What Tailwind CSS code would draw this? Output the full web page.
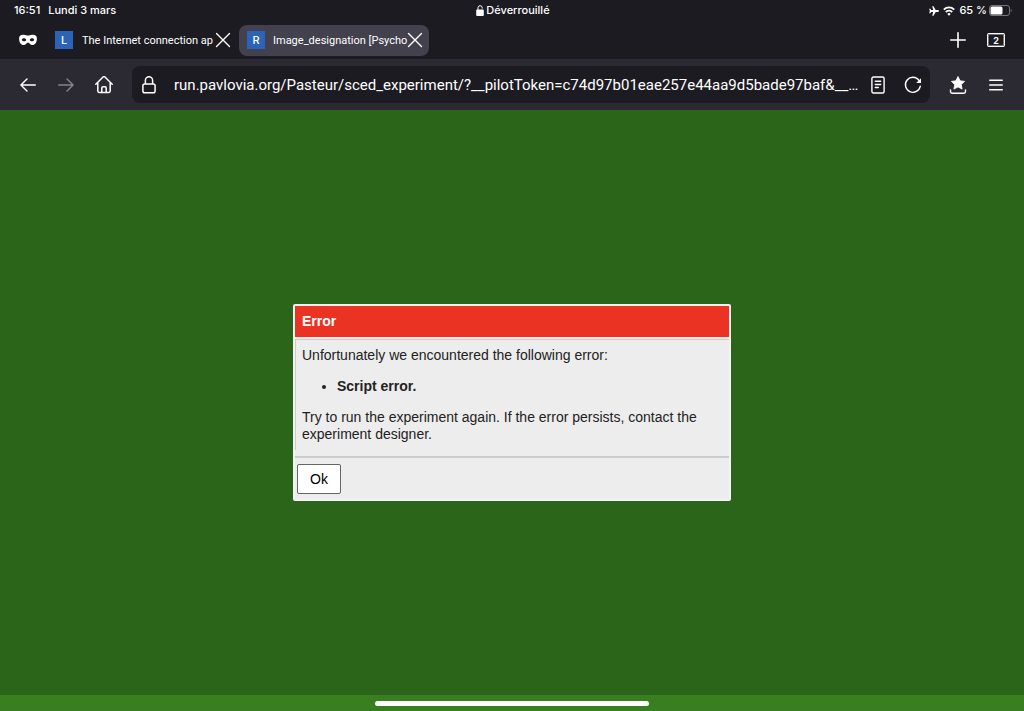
<!DOCTYPE html>
<html lang="fr">
<head>
    <meta charset="UTF-8">
    <meta name="viewport" content="width=device-width, initial-scale=1.0">
    <title>Image_designation [PsychoJS]</title>
    <script src="https://cdn.jsdelivr.net/npm/@tailwindcss/browser@4"></script>
</head>
<body class="flex flex-col min-h-screen bg-[#2b6519] text-white font-['Inter',sans-serif]">
    <!-- Status bar -->
    <div class="grid grid-cols-3 items-center h-[21px] pl-[14px] pr-3 bg-[#1c1b22] text-[11px] leading-none font-medium">
        <div class="flex gap-2">
            <span>16:51</span>
            <span>Lundi 3 mars</span>
        </div>
        <div class="flex items-center justify-center gap-[2px]">
            <svg class="w-2 h-3" viewBox="0 0 8 12" fill="none">
                <rect x="0.2" y="4.600" width="7.600" height="6.400" rx="1" fill="#fff"/>
                <path d="M2 5.500V2.800a2.100 2.100 0 0 1 4.200 0V3.600" stroke="#fff" stroke-width="1"/>
            </svg>
            <span>Déverrouillé</span>
        </div>
        <div class="flex items-center justify-end gap-1">
            <svg class="w-[10px] h-[10px]" viewBox="0 0 10 10" fill="#fff">
                <path d="M10 5c0 .5-.6.9-1.300.9H6.700L4.500 9.700H3.200L4.200 5.900H2.200L1.300 7.200H.2L.8 5 .2 2.800h1.100l.9 1.300h2L3.200.3h1.300l2.200 3.800h2C9.400 4.100 10 4.500 10 5z"/>
            </svg>
            <svg class="w-3 h-[10px]" viewBox="0 0 12 10" fill="none" stroke="#fff" stroke-width="1.800">
                <path d="M.8 3.600a7.400 7.400 0 0 1 10.400 0M2.800 6a4.500 4.500 0 0 1 6.400 0"/>
                <path d="M6 9.700 4.300 7.900a2.400 2.400 0 0 1 3.400 0z" fill="#fff" stroke="none"/>
            </svg>
            <span>65 %</span>
            <svg class="w-[23px] h-[11px] -ml-[2px]" viewBox="0 0 23 11" fill="none">
                <rect x="0.5" y="0.5" width="20" height="10" rx="2.500" stroke="#77767c"/>
                <rect x="1.500" y="1.500" width="12" height="8" rx="1.500" fill="#fff"/>
                <path d="M21.800 4v3c.6-.2 1-.8 1-1.500s-.4-1.300-1-1.500z" fill="#77767c"/>
            </svg>
        </div>
    </div>

    <!-- Tabs -->
    <div class="flex items-center h-[38px] px-[9px] bg-[#1c1b22]">
        <button type="button" aria-label="Navigation privée" class="flex items-center justify-center w-[38px] h-8">
            <svg class="w-[18px] h-3" viewBox="0 0 18 12">
                <path fill="#fff" fill-rule="evenodd" d="M4.200.7C6.300.4 7.600 1.600 9 1.600s2.700-1.200 4.800-.9c2.700.3 4.100 1.200 4.100 3.700 0 3.800-1.800 6.600-4.600 6.600-2.100 0-3-2.600-4.300-2.600S6.800 11 4.700 11C1.900 11 .1 8.200.1 4.400.1 1.900 1.500 1 4.200.7zM5 4.300c-1.200 0-2 .7-2.300 1.600.6.900 1.400 1.400 2.400 1.400 1.100 0 1.800-.6 2.200-1.400C6.900 5 6.200 4.300 5 4.300zm8 0c-1.200 0-1.900.7-2.300 1.600.4.800 1.100 1.400 2.200 1.400 1 0 1.800-.5 2.400-1.400C15 5 14.200 4.300 13 4.300z"/>
            </svg>
        </button>
        <div class="flex items-center w-[190px] h-[31px] pl-2 pr-[6px] rounded-lg">
            <span class="flex items-center justify-center shrink-0 w-[18px] h-[18px] bg-[#2a63b8] text-[11px] leading-none font-medium">L</span>
            <a href="#" class="flex-1 pt-[2px] ml-[9px] whitespace-nowrap text-[11px] font-['Roboto',sans-serif]">The Internet connection ap</a>
            <button type="button" aria-label="Fermer l'onglet" class="shrink-0">
                <svg class="w-4 h-4" viewBox="0 0 16 16" stroke="#fff" stroke-width="1.400" stroke-linecap="round"><path d="M1.500 1.500l13 13M14.500 1.500l-13 13"/></svg>
            </button>
        </div>
        <div class="flex items-center w-[190px] h-[31px] pl-2 pr-[6px] ml-[2px] rounded-lg bg-[#42414d]">
            <span class="flex items-center justify-center shrink-0 w-[18px] h-[18px] bg-[#2a63b8] text-[11px] leading-none font-medium">R</span>
            <a href="#" class="flex-1 pt-[2px] ml-2 whitespace-nowrap text-[11px] font-['Roboto',sans-serif]">Image_designation [Psycho</a>
            <button type="button" aria-label="Fermer l'onglet" class="shrink-0">
                <svg class="w-4 h-4" viewBox="0 0 16 16" stroke="#fff" stroke-width="1.400" stroke-linecap="round"><path d="M1.500 1.500l13 13M14.500 1.500l-13 13"/></svg>
            </button>
        </div>
        <button type="button" aria-label="Nouvel onglet" class="flex items-center justify-center w-[38px] h-8 ml-auto">
            <svg class="w-4 h-4" viewBox="0 0 16 16" stroke="#fff" stroke-width="1.600" stroke-linecap="round"><path d="M8 .8v14.400M.8 8h14.400"/></svg>
        </button>
        <button type="button" aria-label="Onglets ouverts" class="flex items-center justify-center w-[38px] h-8">
            <span class="flex items-center justify-center w-[18px] h-[14px] rounded-[2px] ring-1 ring-inset ring-white outline outline-white/40 -outline-offset-2 text-[9px] leading-none font-bold">2</span>
        </button>
    </div>

    <!-- Toolbar -->
    <div class="flex items-center h-[51px] px-[9px] bg-[#2b2a33]">
        <button type="button" aria-label="Précédent" class="flex items-center justify-center w-[38px] h-9">
            <svg class="w-4 h-4" viewBox="0 0 16 16" fill="none" stroke="#fff" stroke-width="1.400" stroke-linecap="round" stroke-linejoin="round"><path d="M15.300 8H.9M7 1.900.9 8 7 14.100"/></svg>
        </button>
        <button type="button" aria-label="Suivant" class="flex items-center justify-center w-[38px] h-9">
            <svg class="w-4 h-4" viewBox="0 0 16 16" fill="none" stroke="#85848b" stroke-width="1.400" stroke-linecap="round" stroke-linejoin="round"><path d="M.7 8h14.400M9 1.900 15.100 8 9 14.100"/></svg>
        </button>
        <button type="button" aria-label="Accueil" class="flex items-center justify-center w-[38px] h-9">
            <svg class="w-[18px] h-[18px]" viewBox="0 0 18 18" fill="none" stroke="#fff" stroke-width="1.500" stroke-linecap="round" stroke-linejoin="round">
                <path d="M.8 8.300 8.300.8a1 1 0 0 1 1.400 0l7.500 7.500M2.800 6.700v8.300c0 .9.500 1.400 1.400 1.400h9.600c.9 0 1.400-.5 1.400-1.400V6.700M6.800 16.200v-4.200c0-.8.5-1.300 1.300-1.300h1.800c.8 0 1.300.5 1.300 1.300v4.200"/>
            </svg>
        </button>
        <div class="flex items-center flex-1 min-w-0 h-[37px] mx-[9px] pl-[10px] rounded-lg bg-[#1c1b22]">
            <svg class="shrink-0 w-[14px] h-[18px]" viewBox="0 0 14 18" fill="none" stroke="#fff" stroke-width="1.500">
                <rect x="0.9" y="8" width="12.200" height="8.800" rx="1.800"/>
                <path d="M3.400 8V4.300a3.600 3.600 0 0 1 7.200 0V8"/>
            </svg>
            <input type="text" aria-label="Adresse" value="run.pavlovia.org/Pasteur/sced_experiment/?__pilotToken=c74d97b01eae257e44aa9d5bade97baf&amp;__..." class="flex-1 min-w-0 pt-[2px] ml-[18px] bg-transparent text-[15px] font-['Roboto',sans-serif] text-ellipsis outline-none">
            <button type="button" aria-label="Mode lecture" class="flex items-center justify-center shrink-0 w-[35px] h-9">
                <svg class="w-[14px] h-[18px]" viewBox="0 0 14 18" fill="none" stroke="#fff" stroke-width="1.400" stroke-linecap="round">
                    <rect x="0.9" y="1" width="12.200" height="16" rx="1.500"/>
                    <path d="M4.300 5.300h5.400M4.300 8.500h5.400M4.300 11.500h3"/>
                </svg>
            </button>
            <button type="button" aria-label="Actualiser" class="flex items-center justify-center shrink-0 w-[35px] h-9">
                <svg class="w-[18px] h-[18px]" viewBox="0 0 18 18" fill="none" stroke="#fff" stroke-width="1.400" stroke-linecap="round" stroke-linejoin="round">
                    <path d="M16.300 10.200A7.500 7.500 0 1 1 15 4.400l1.200 1.600"/>
                    <path d="M17 2.300v4.700h-4.800z" fill="#fff" stroke="none"/>
                </svg>
            </button>
        </div>
        <button type="button" aria-label="Marque-pages" class="flex items-center justify-center w-[38px] h-9">
            <svg class="w-[18px] h-[18px]" viewBox="0 0 18 18" fill="none">
                <path d="M9 .5l2.100 4.300 4.500.6-3.300 3.200.8 4.500L9 10.900l-4.100 2.200.8-4.500-3.300-3.200 4.500-.6z" fill="#fff" stroke="#fff" stroke-width="0.800" stroke-linejoin="round"/>
                <path d="M1.500 14v1.500c0 1.100.6 1.700 1.700 1.700h11.600c1.100 0 1.700-.6 1.700-1.700V14" stroke="#fff" stroke-width="1.400" stroke-linecap="round"/>
            </svg>
        </button>
        <button type="button" aria-label="Menu" class="flex items-center justify-center w-[38px] h-9">
            <svg class="w-[14px] h-3" viewBox="0 0 14 12" stroke="#fff" stroke-width="1.600" stroke-linecap="round"><path d="M.8 1.200h12.400M.8 6h12.400M.8 10.800h12.400"/></svg>
        </button>
    </div>

    <!-- Experiment page -->
    <main class="flex flex-1 items-center justify-center font-['Liberation_Sans',Arial,sans-serif] text-sm leading-[17px] text-[#222]">
        <div role="dialog" aria-labelledby="dialog-title" class="w-[438px] border-2 border-[#f3f3f3] rounded-[2px] bg-[#ededed]">
            <h1 id="dialog-title" class="px-[7px] py-[7px] bg-[#ea3323] text-white font-bold">Error</h1>
            <div class="mt-[2px] pl-[6px] pr-5 pt-[7px] pb-[7px] border-t border-l border-[#ccc]">
                <p>Unfortunately we encountered the following error:</p>
                <ul class="my-[14px] pl-[35px] list-disc font-bold">
                    <li>Script error.</li>
                </ul>
                <p>Try to run the experiment again. If the error persists, contact the experiment designer.</p>
            </div>
            <div class="mt-[6px] p-[2px] pt-[6px] pb-[5px] border-t-2 border-[#ccc]">
                <button type="button" class="block w-[44px] h-[30px] border border-[#666] rounded-[2px] bg-white text-black">Ok</button>
            </div>
        </div>
    </main>

    <!-- Home indicator -->
    <footer class="flex items-center justify-center h-4 bg-[#397f21]">
        <div class="w-[274px] h-[5px] rounded-full bg-white"></div>
    </footer>
</body>
</html>
